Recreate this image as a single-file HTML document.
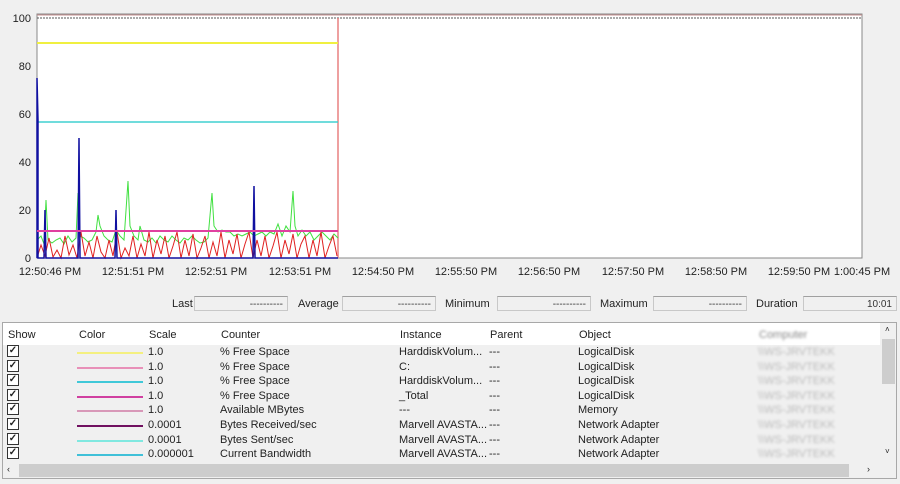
<!DOCTYPE html>
<html><head><meta charset="utf-8"><style>
body{margin:0;width:900px;height:484px;background:#f0f0f0;font-family:"Liberation Sans",sans-serif;font-size:11px;color:#222;position:relative;overflow:hidden}
.a{position:absolute;white-space:nowrap}
.box{position:absolute;height:15px;border:1px solid #c8c8c8;border-top-color:#a0a0a0;background:#f0f0f0;text-align:right;font-size:10px;line-height:15px;box-sizing:border-box;padding-right:4px;color:#333}
.tbl{position:absolute;left:2px;top:322px;width:895px;height:157px;border:1px solid #a8a8a8;background:#f0f0f0;box-sizing:border-box}
.row{position:absolute;left:0;height:14px;width:877px}
.cb{position:absolute;left:5px;width:10px;height:10px;border:1px solid #333;background:#fff;font-size:10px;line-height:10px;text-align:center;font-weight:bold}
.ln{position:absolute;left:75px;width:66px;height:2px}
.blur{color:#bbb;filter:blur(1.3px)}
</style></head><body>
<svg class="a" style="left:0;top:0" width="900" height="290">
<rect x="37" y="14" width="825" height="244" fill="#fff" stroke="#888" stroke-width="1"/>
<line x1="37" y1="15" x2="862" y2="15" stroke="#c89090"/>
<line x1="37" y1="18" x2="862" y2="18" stroke="#555" stroke-dasharray="2,1"/>
<line x1="338" y1="18" x2="338" y2="258" stroke="#e88080" stroke-width="1.5"/>
<line x1="37" y1="43" x2="338" y2="43" stroke="#f0f040" stroke-width="2"/>
<line x1="37" y1="122" x2="338" y2="122" stroke="#40d0d0" stroke-width="1.5"/>
<polyline fill="none" stroke="#40e040" stroke-width="1" points="37,240 41,236 44,244 46,200 48,240 52,243 56,240 60,238 64,244 68,236 72,242 76,238 78,193 80,236 84,238 88,242 92,240 96,232 98,215 100,226 104,236 108,240 112,242 116,230 120,236 124,240 128,181 130,226 134,236 138,240 140,226 144,240 148,242 152,238 156,243 160,236 164,240 168,242 172,236 176,240 180,243 184,238 188,240 192,236 196,240 200,243 204,242 208,238 212,193 214,226 218,232 222,230 226,232 230,232 234,236 238,234 242,236 246,234 250,232 254,236 258,234 262,232 266,236 270,232 274,234 278,224 282,236 286,226 290,232 293,191 295,226 298,236 302,230 306,236 310,232 314,240 318,236 322,232 326,236 330,240 334,234 338,238"/>
<polyline fill="none" stroke="#e02020" stroke-width="1" points="37,258 41,245 45,256 49,238 53,257 57,250 61,258 65,236 69,255 73,245 77,258 81,232 85,256 89,242 93,258 97,236 101,252 105,258 109,240 113,256 117,232 121,258 125,248 129,256 133,236 137,258 141,244 145,256 149,232 153,258 157,240 161,254 165,236 169,258 173,246 177,232 181,258 185,240 189,256 193,234 197,258 201,248 205,236 209,258 213,242 217,256 221,232 225,258 229,240 233,254 237,234 241,258 245,244 249,232 253,258 257,240 261,256 265,236 269,258 273,246 277,232 281,258 285,240 289,254 293,234 297,258 301,244 305,236 309,258 313,240 317,256 321,232 325,258 329,246 333,236 337,256"/>
<polyline fill="none" stroke="#1010a0" stroke-width="1.5" points="37,258 37,78 38,120 38,258 44,258 45,210 46,258 78,258 79,138 80,258 115,258 116,210 117,258 253,258 254,186 255,258 338,258"/>
<line x1="37" y1="231" x2="338" y2="231" stroke="#e040a0" stroke-width="2"/>
<g font-size="11" fill="#222" font-family="Liberation Sans">
<text x="31" y="22" text-anchor="end">100</text><text x="31" y="70" text-anchor="end">80</text><text x="31" y="118" text-anchor="end">60</text><text x="31" y="166" text-anchor="end">40</text><text x="31" y="214" text-anchor="end">20</text><text x="31" y="262" text-anchor="end">0</text>
<g text-anchor="middle"><text x="50" y="275">12:50:46 PM</text><text x="133" y="275">12:51:51 PM</text><text x="216" y="275">12:52:51 PM</text><text x="300" y="275">12:53:51 PM</text><text x="383" y="275">12:54:50 PM</text><text x="466" y="275">12:55:50 PM</text><text x="549" y="275">12:56:50 PM</text><text x="633" y="275">12:57:50 PM</text><text x="716" y="275">12:58:50 PM</text><text x="799" y="275">12:59:50 PM</text><text x="862" y="275">1:00:45 PM</text></g>
</g>
</svg>
<span class="a" style="left:172px;top:298px">Last</span><div class="box" style="left:194px;top:296px;width:94px">----------</div>
<span class="a" style="left:298px;top:298px">Average</span><div class="box" style="left:342px;top:296px;width:94px">----------</div>
<span class="a" style="left:445px;top:298px">Minimum</span><div class="box" style="left:497px;top:296px;width:94px">----------</div>
<span class="a" style="left:600px;top:298px">Maximum</span><div class="box" style="left:653px;top:296px;width:94px">----------</div>
<span class="a" style="left:756px;top:298px">Duration</span><div class="box" style="left:803px;top:296px;width:94px">10:01</div>
<div class="tbl">
<div style="position:absolute;left:0;top:0;width:877px;height:22px;background:#fff"></div>
<span class="a" style="left:5px;top:6px">Show</span><span class="a" style="left:76px;top:6px">Color</span><span class="a" style="left:146px;top:6px">Scale</span><span class="a" style="left:218px;top:6px">Counter</span><span class="a" style="left:397px;top:6px">Instance</span><span class="a" style="left:487px;top:6px">Parent</span><span class="a" style="left:576px;top:6px">Object</span><span class="a blur" style="left:756px;top:6px;color:#888">Computer</span>
<div style="position:absolute;left:878px;top:0;width:15px;height:140px;background:#f0f0f0"><div style="position:absolute;left:1px;top:16px;width:13px;height:45px;background:#cdcdcd"></div><span class="a" style="left:4px;top:2px;font-size:8px">˄</span><span class="a" style="left:4px;top:124px;font-size:8px">˅</span></div>
<div style="position:absolute;left:0;top:140px;width:878px;height:15px;background:#f0f0f0"><div style="position:absolute;left:16px;top:1px;width:830px;height:13px;background:#cdcdcd"></div><span class="a" style="left:4px;top:1px;font-size:9px">‹</span><span class="a" style="left:864px;top:1px;font-size:9px">›</span></div>
</div>
<div style="position:absolute;left:2px;top:345px">
<div class="row" style="top:0"><div class="cb">✓</div><div class="ln" style="top:7px;background:#f4f080"></div><span class="a" style="left:146px;top:1px">1.0</span><span class="a" style="left:218px;top:1px">% Free Space</span><span class="a" style="left:397px;top:1px">HarddiskVolum...</span><span class="a" style="left:487px;top:1px">---</span><span class="a" style="left:576px;top:1px">LogicalDisk</span><span class="a blur" style="left:756px;top:1px">\\WS-JRVTEKK</span></div>
<div class="row" style="top:14.6px"><div class="cb">✓</div><div class="ln" style="top:7px;background:#e890b8"></div><span class="a" style="left:146px;top:1px">1.0</span><span class="a" style="left:218px;top:1px">% Free Space</span><span class="a" style="left:397px;top:1px">C:</span><span class="a" style="left:487px;top:1px">---</span><span class="a" style="left:576px;top:1px">LogicalDisk</span><span class="a blur" style="left:756px;top:1px">\\WS-JRVTEKK</span></div>
<div class="row" style="top:29.2px"><div class="cb">✓</div><div class="ln" style="top:7px;background:#40c8d8"></div><span class="a" style="left:146px;top:1px">1.0</span><span class="a" style="left:218px;top:1px">% Free Space</span><span class="a" style="left:397px;top:1px">HarddiskVolum...</span><span class="a" style="left:487px;top:1px">---</span><span class="a" style="left:576px;top:1px">LogicalDisk</span><span class="a blur" style="left:756px;top:1px">\\WS-JRVTEKK</span></div>
<div class="row" style="top:43.8px"><div class="cb">✓</div><div class="ln" style="top:7px;background:#d040a0"></div><span class="a" style="left:146px;top:1px">1.0</span><span class="a" style="left:218px;top:1px">% Free Space</span><span class="a" style="left:397px;top:1px">_Total</span><span class="a" style="left:487px;top:1px">---</span><span class="a" style="left:576px;top:1px">LogicalDisk</span><span class="a blur" style="left:756px;top:1px">\\WS-JRVTEKK</span></div>
<div class="row" style="top:58.4px"><div class="cb">✓</div><div class="ln" style="top:7px;background:#d898b8"></div><span class="a" style="left:146px;top:1px">1.0</span><span class="a" style="left:218px;top:1px">Available MBytes</span><span class="a" style="left:397px;top:1px">---</span><span class="a" style="left:487px;top:1px">---</span><span class="a" style="left:576px;top:1px">Memory</span><span class="a blur" style="left:756px;top:1px">\\WS-JRVTEKK</span></div>
<div class="row" style="top:73px"><div class="cb">✓</div><div class="ln" style="top:7px;background:#701060"></div><span class="a" style="left:146px;top:1px">0.0001</span><span class="a" style="left:218px;top:1px">Bytes Received/sec</span><span class="a" style="left:397px;top:1px">Marvell AVASTA...</span><span class="a" style="left:487px;top:1px">---</span><span class="a" style="left:576px;top:1px">Network Adapter</span><span class="a blur" style="left:756px;top:1px">\\WS-JRVTEKK</span></div>
<div class="row" style="top:87.6px"><div class="cb">✓</div><div class="ln" style="top:7px;background:#80e8e0"></div><span class="a" style="left:146px;top:1px">0.0001</span><span class="a" style="left:218px;top:1px">Bytes Sent/sec</span><span class="a" style="left:397px;top:1px">Marvell AVASTA...</span><span class="a" style="left:487px;top:1px">---</span><span class="a" style="left:576px;top:1px">Network Adapter</span><span class="a blur" style="left:756px;top:1px">\\WS-JRVTEKK</span></div>
<div class="row" style="top:102.2px"><div class="cb">✓</div><div class="ln" style="top:7px;background:#40c0d8"></div><span class="a" style="left:146px;top:1px">0.000001</span><span class="a" style="left:218px;top:1px">Current Bandwidth</span><span class="a" style="left:397px;top:1px">Marvell AVASTA...</span><span class="a" style="left:487px;top:1px">---</span><span class="a" style="left:576px;top:1px">Network Adapter</span><span class="a blur" style="left:756px;top:1px">\\WS-JRVTEKK</span></div>
</div>
</body></html>
